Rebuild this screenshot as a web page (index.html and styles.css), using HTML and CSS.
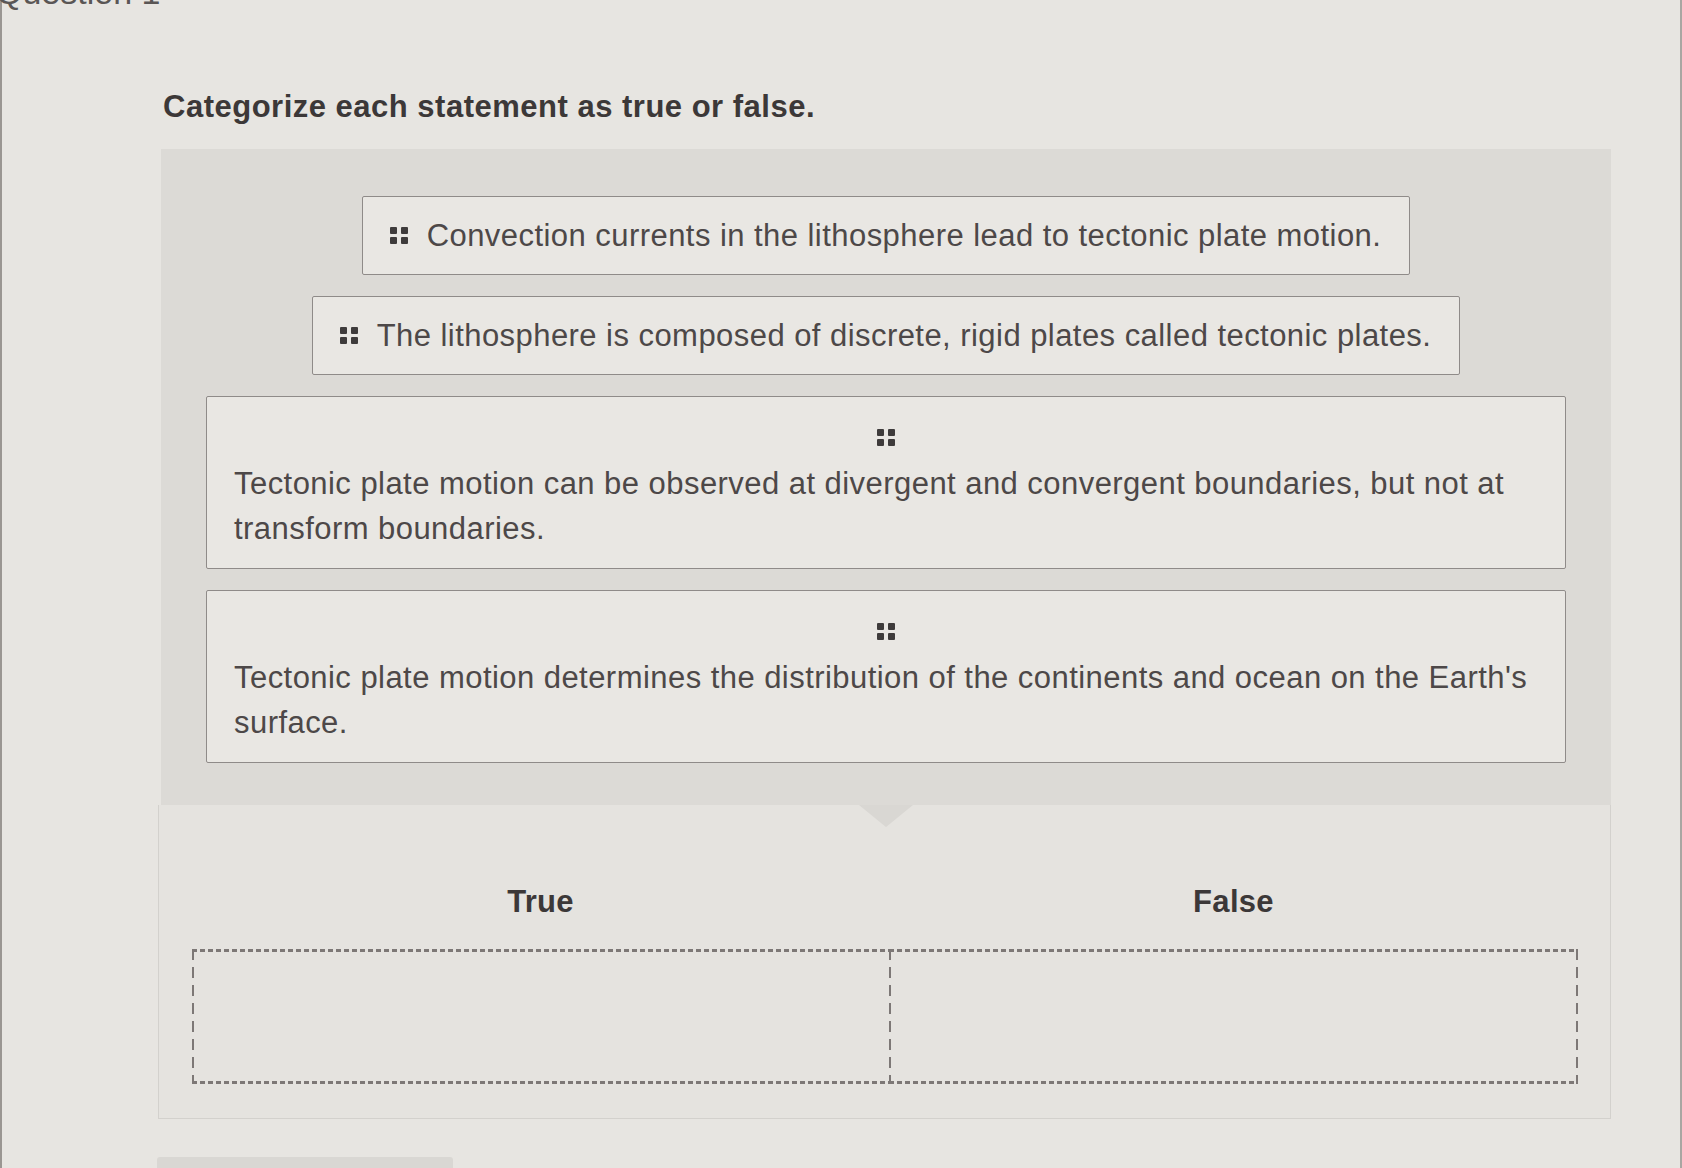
FILE: index.html
```html
<!DOCTYPE html>
<html>
<head>
<meta charset="utf-8">
<link rel="stylesheet" href="styles.css">
</head>
<body>
<div class="page">
  <div class="qlabel">Question 1</div>
  <div class="main">
    <h1 class="prompt">Categorize each statement as true or false.</h1>
    <div class="source">
      <div class="card inline">
        <span class="grip"><i></i><i></i><i></i><i></i></span>
        <span class="txt">Convection currents in the lithosphere lead to tectonic plate motion.</span>
      </div>
      <div class="card inline">
        <span class="grip"><i></i><i></i><i></i><i></i></span>
        <span class="txt">The lithosphere is composed of discrete, rigid plates called tectonic plates.</span>
      </div>
      <div class="card block">
        <span class="grip"><i></i><i></i><i></i><i></i></span>
        <span class="txt">Tectonic plate motion can be observed at divergent and convergent boundaries, but not at transform boundaries.</span>
      </div>
      <div class="card block">
        <span class="grip"><i></i><i></i><i></i><i></i></span>
        <span class="txt">Tectonic plate motion determines the distribution of the continents and ocean on the Earth's surface.</span>
      </div>
    </div>
    <div class="targets">
      <div class="pointer"></div>
      <div class="heads">
        <div class="head">True</div>
        <div class="head">False</div>
      </div>
      <div class="zones">
        <div class="zone left"></div>
        <div class="zone right"></div>
      </div>
    </div>
  </div>
  <div class="footer-btn"></div>
</div>
</body>
</html>
```

FILE: styles.css
```css
html, body {
  margin: 0;
  padding: 0;
  background: #e7e5e1;
}
body {
  font-family: "Liberation Sans", Arial, sans-serif;
  color: #4d4848;
  overflow: hidden;
  height: 1168px;
}
.page {
  position: relative;
  display: flow-root;
  height: 1168px;
  border-left: 2px solid #9a9692;
  border-right: 2px solid #a9a6a2;
  box-sizing: border-box;
}
.qlabel {
  font-size: 34px;
  color: #5a5655;
  margin-top: -26px;
  margin-left: -6px;
  height: 36px;
  line-height: 36px;
}
.main {
  margin-left: 159px;
  width: 1450px;
}
.prompt {
  margin: 77px 0 0 2px;
  font-size: 31px;
  letter-spacing: 0.5px;
  font-weight: bold;
  color: #3c3838;
  line-height: 40px;
  height: 62px;
}
.source {
  background: #dcdad6;
  padding: 47px 45px 42px;
  display: flex;
  flex-direction: column;
  align-items: center;
  gap: 21px;
}
.card {
  background: #e9e7e3;
  border: 1.5px solid #8f8b89;
  border-radius: 2px;
  box-sizing: border-box;
}
.card.inline {
  display: flex;
  align-items: center;
  height: 79px;
  padding: 0 28px 0 27px;
}
.card.inline .grip {
  margin-right: 19px;
}
.card.block {
  align-self: stretch;
  display: flex;
  flex-direction: column;
  align-items: flex-start;
  padding: 32px 27px 13px 27px;
  min-height: 173px;
}
.card.block .txt {
  margin-right: -16px;
}
.card.block .grip {
  align-self: center;
  margin-bottom: 15px;
}
.txt {
  font-size: 31px;
  letter-spacing: 0.45px;
  line-height: 45px;
  color: #4d4848;
}
.grip {
  display: inline-grid;
  grid-template-columns: 7px 7px;
  grid-template-rows: 7px 7px;
  gap: 3px 4px;
  flex: none;
}
.grip i {
  display: block;
  background: #3e3b3b;
  border-radius: 1px;
}
.targets {
  position: relative;
  background: #e5e3df;
  border: 1px solid #d3d1cd;
  border-top: none;
  padding: 0 32px 34px 33px;
  margin-left: -3px;
}
.pointer {
  position: absolute;
  top: 0;
  left: 700px;
  width: 0;
  height: 0;
  border-left: 27px solid transparent;
  border-right: 27px solid transparent;
  border-top: 22px solid #d9d7d3;
}
.heads {
  display: grid;
  grid-template-columns: 697px 689px;
  padding-top: 79px;
  height: 65px;
}
.head {
  text-align: center;
  font-size: 31px;
  letter-spacing: 0.3px;
  font-weight: bold;
  color: #3c3838;
  line-height: 36px;
}
.zones {
  display: grid;
  grid-template-columns: 697px 689px;
  height: 135px;
}
.zone {
  background-color: transparent;
  background-image:
    repeating-linear-gradient(90deg, #7d7876 0 5px, transparent 5px 8px),
    repeating-linear-gradient(90deg, #7d7876 0 5px, transparent 5px 8px),
    repeating-linear-gradient(180deg, #7d7876 0 11px, transparent 11px 18px);
  background-size: 100% 3px, 100% 3px, 2px 100%;
  background-position: 0 0, 0 100%, 0 0;
  background-repeat: no-repeat;
}
.zone.right {
  background-image:
    repeating-linear-gradient(90deg, #7d7876 0 5px, transparent 5px 8px),
    repeating-linear-gradient(90deg, #7d7876 0 5px, transparent 5px 8px),
    repeating-linear-gradient(180deg, #7d7876 0 11px, transparent 11px 18px),
    repeating-linear-gradient(180deg, #7d7876 0 11px, transparent 11px 18px);
  background-size: 100% 3px, 100% 3px, 2px 100%, 2px 100%;
  background-position: 0 0, 0 100%, 0 0, 100% 0;
}
.footer-btn {
  position: absolute;
  left: 155px;
  top: 1157px;
  width: 296px;
  height: 20px;
  background: #d9d7d3;
  border-radius: 3px;
}
```
